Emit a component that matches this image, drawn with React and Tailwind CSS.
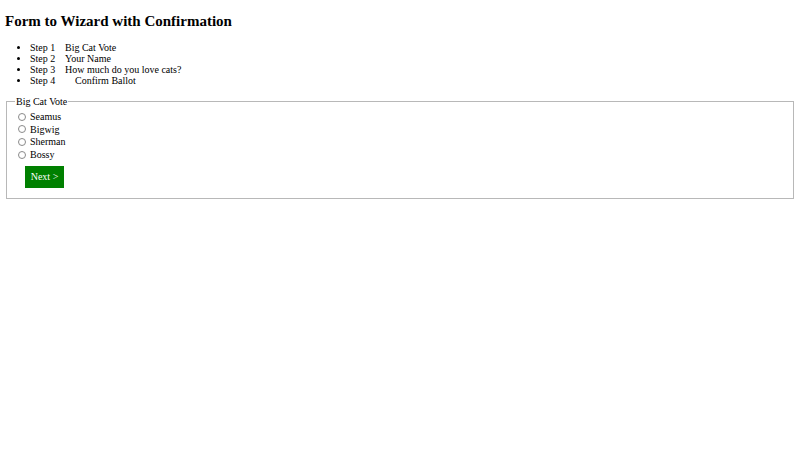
export default function App() {
  const steps = [
    { s: "Step 1", t: "Big Cat Vote", w: "w-[35px]" },
    { s: "Step 2", t: "Your Name", w: "w-[35px]" },
    { s: "Step 3", t: "How much do you love cats?", w: "w-[35px]" },
    { s: "Step 4", t: "Confirm Ballot", w: "w-[45px]" },
  ];
  const cats = ["Seamus", "Bigwig", "Sherman", "Bossy"];
  return (
    <div className="min-h-[450px] bg-white px-[5px] text-[10px] leading-[11.5px] text-black [font-family:'Liberation_Serif',serif]">
      <h2 className="pt-[13px] text-[15px] font-bold leading-[17px]">Form to Wizard with Confirmation</h2>
      <ul className="mt-[12px] list-disc pl-[25px] leading-[11px]">
        {steps.map((x) => (
          <li key={x.s}>
            <span className={`inline-block ${x.w}`}>{x.s}</span>
            <span>{x.t}</span>
          </li>
        ))}
      </ul>
      <fieldset className="mx-[1px] mt-[10px] border border-[#b8b8b8] px-[8px] pb-[10px]">
        <legend className="px-[1px] leading-[11.5px]">Big Cat Vote</legend>
        <div className="flex flex-col pt-[3px]">
          {cats.map((c) => (
            <label key={c} className="flex h-[12.6px] items-center">
              <span className="ml-[3px] mr-[4px] h-[8px] w-[8px] rounded-full border border-[#8a8a8a] bg-white" />
              <span>{c}</span>
            </label>
          ))}
        </div>
        <button className="ml-[10px] mt-[5px] flex h-[22px] w-[39px] items-center justify-center bg-[#008000] text-[10px] text-white">
          Next &gt;
        </button>
      </fieldset>
    </div>
  );
}
